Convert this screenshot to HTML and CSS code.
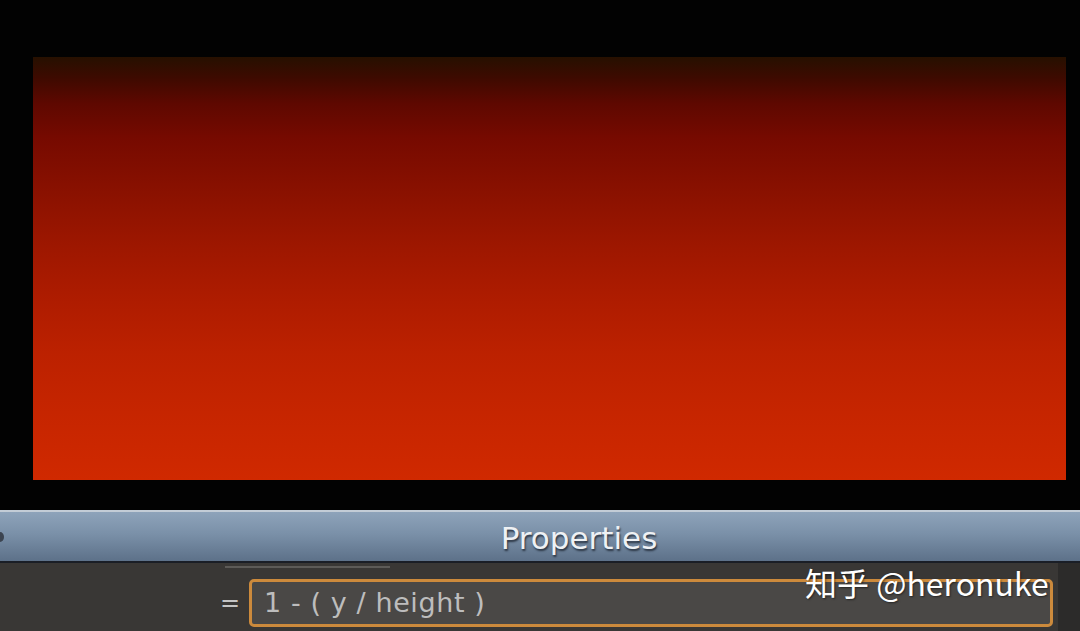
FILE: index.html
```html
<!DOCTYPE html>
<html>
<head>
<meta charset="utf-8">
<link rel="stylesheet" href="styles.css">
</head>
<body>
<div class="viewer">
  <div class="ramp"></div>
</div>
<div class="panel">
  <div class="header">
    <span class="knob"></span>
    <span class="title">Properties</span>
  </div>
  <div class="body">
    <div class="content">
      <div class="tabline"></div>
      <div class="row">
        <span class="eq">=</span>
        <div class="field">1 - ( y / height )</div>
      </div>
    </div>
    <div class="side"></div>
  </div>
  <div class="watermark">知乎 @heronuke</div>
</div>
</body>
</html>
```
FILE: styles.css
```css
html, body {
  margin: 0;
  padding: 0;
  background: #000;
  width: 1080px;
  height: 631px;
  overflow: hidden;
  font-family: "DejaVu Sans", "Noto Sans CJK SC", sans-serif;
}
.viewer {
  height: 510px;
  box-sizing: border-box;
  padding: 57px 14px 0 33px;
  background: #020202;
}
.ramp {
  width: 1033px;
  height: 423px;
  background: linear-gradient(to bottom,
    #261000 0%,
    #3e0a00 5%,
    #5e0800 11%,
    #760a00 19%,
    #8a1100 32%,
    #9e1700 45%,
    #af1c00 58%,
    #bc2100 70%,
    #c62500 84%,
    #d02900 100%);
}
.panel {
  position: relative;
  height: 121px;
  display: flex;
  flex-direction: column;
}
.header {
  position: relative;
  height: 49px;
  border-top: 2px solid #c3ccd6;
  border-bottom: 2px solid #1a1e26;
  background: linear-gradient(to bottom, #8ea3ba 0%, #7a90a8 45%, #5d7189 100%);
  display: flex;
  align-items: center;
  justify-content: center;
}
.knob {
  position: absolute;
  left: -4px;
  top: 20px;
  width: 8px;
  height: 10px;
  border-radius: 50%;
  background: #3c4450;
}
.title {
  font-size: 31px;
  color: #eef1f4;
  text-shadow: 1px 2px 2px #2a3442;
  padding-left: 78px;
  margin-top: 2px;
}
.body {
  flex: 1;
  display: flex;
  background: #393735;
}
.content {
  flex: 1;
  display: flex;
  flex-direction: column;
}
.side {
  width: 22px;
  background: #2c2b2a;
}
.tabline {
  margin-left: 225px;
  width: 165px;
  height: 2px;
  margin-top: 3px;
  background: #5d5b58;
}
.row {
  display: flex;
  align-items: center;
  margin-top: 11px;
  padding-left: 220px;
}
.eq {
  width: 29px;
  font-size: 24px;
  color: #c4c4c4;
}
.field {
  box-sizing: border-box;
  width: 804px;
  height: 48px;
  border: 3px solid #cc8a3c;
  border-radius: 5px;
  background: #4a4846;
  color: #bdbdbd;
  font-size: 27px;
  letter-spacing: 0.6px;
  line-height: 42px;
  padding-left: 12px;
}
.watermark {
  position: absolute;
  left: 805px;
  top: 49px;
  font-family: "Noto Sans CJK SC", "DejaVu Sans", sans-serif;
  font-size: 32px;
  color: #ffffff;
  text-shadow: 1px 1px 2px rgba(0,0,0,0.5);
  white-space: nowrap;
}
```
